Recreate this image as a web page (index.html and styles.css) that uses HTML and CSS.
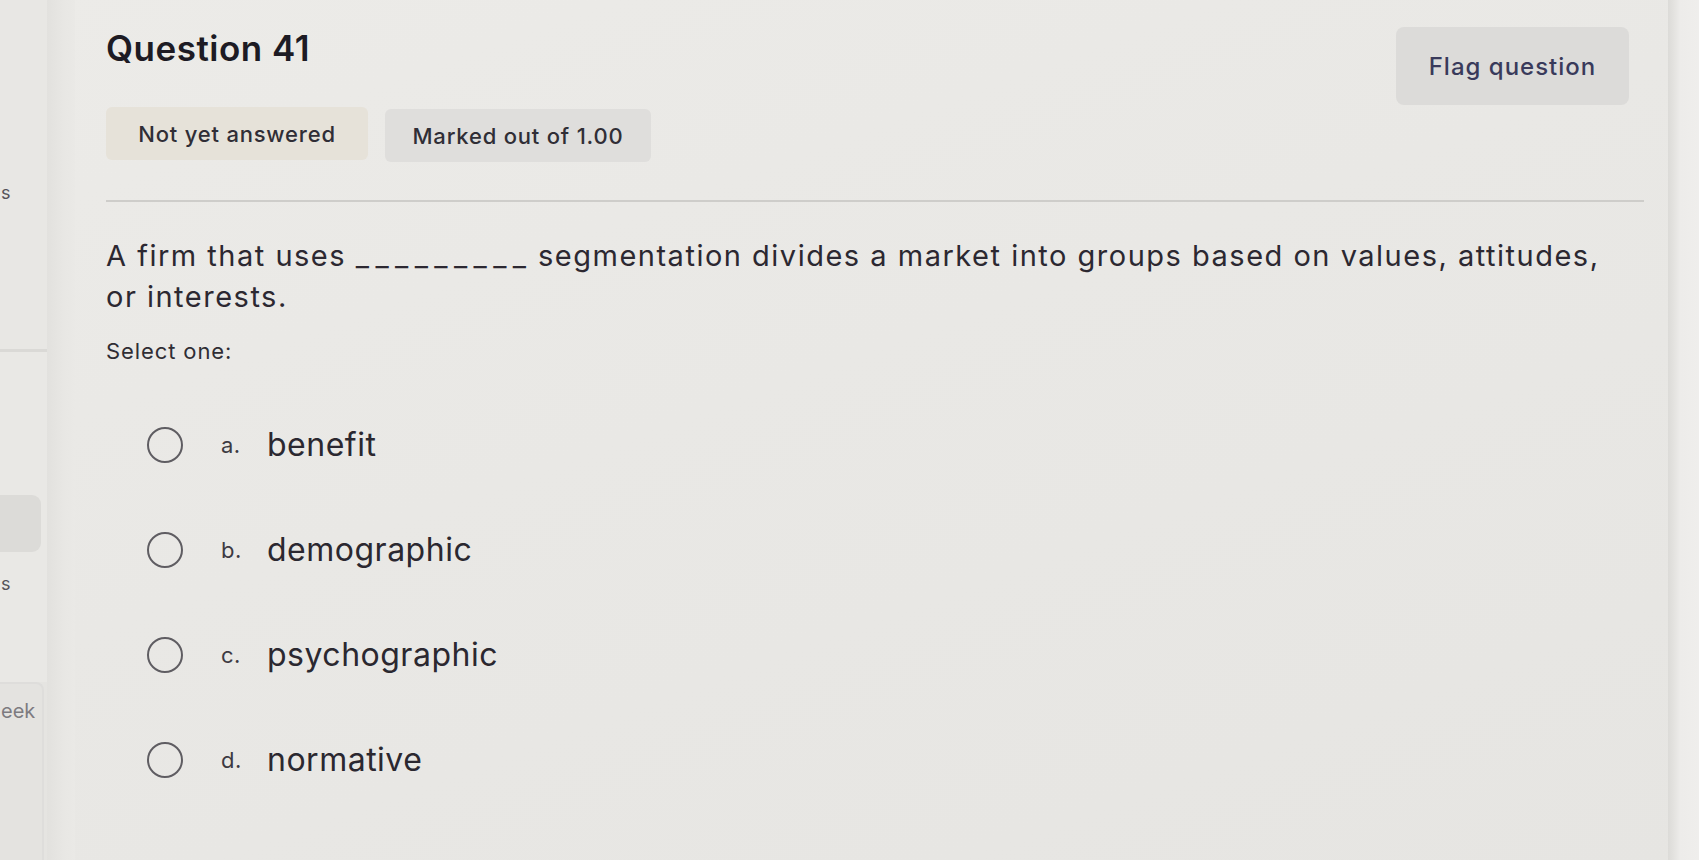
FILE: index.html
```html
<!DOCTYPE html>
<html lang="en">
<head>
<meta charset="utf-8">
<title>Question 41</title>
<link rel="stylesheet" href="styles.css">
</head>
<body>
<div class="page">
  <aside class="sidebar">
    <div class="side-panel side-top"><span class="side-cut cut1">s</span></div>
    <div class="side-panel side-mid">
      <div class="side-box"></div>
      <span class="side-cut cut2">s</span>
    </div>
    <div class="side-panel side-bottom"><span class="side-week">eek</span></div>
  </aside>
  <div class="gutter"></div>
  <main class="main">
    <div class="head">
      <div class="head-left">
        <h1 class="title">Question 41</h1>
        <div class="badges">
          <div class="badge badge-state">Not yet answered</div>
          <div class="badge badge-grade">Marked out of 1.00</div>
        </div>
      </div>
      <button class="flag">Flag question</button>
    </div>
    <div class="rule"></div>
    <p class="qtext">A firm that uses <span class="blank">_________</span> segmentation divides a market into groups based on values, attitudes,<br>or interests.</p>
    <p class="prompt">Select one:</p>
    <div class="answers">
      <label class="opt"><span class="radio"></span><span class="letter">a.</span><span class="otext">benefit</span></label>
      <label class="opt"><span class="radio"></span><span class="letter">b.</span><span class="otext">demographic</span></label>
      <label class="opt"><span class="radio"></span><span class="letter">c.</span><span class="otext">psychographic</span></label>
      <label class="opt"><span class="radio"></span><span class="letter">d.</span><span class="otext">normative</span></label>
    </div>
  </main>
  <div class="right-strip"></div>
</div>
</body>
</html>
```

FILE: styles.css
```css
* { box-sizing: border-box; }
html, body {
  margin: 0;
  padding: 0;
  width: 1699px;
  height: 860px;
  overflow: hidden;
}
body {
  font-family: Inter, "DejaVu Sans", "Liberation Sans", sans-serif;
  background: #e9e8e5;
  color: #2d2a32;
}
.page {
  display: flex;
  height: 860px;
  background: linear-gradient(160deg, #ecebe8 0%, #e9e8e5 45%, #e6e5e2 100%);
}

/* left sidebar (cut off by the screen edge) */
.sidebar {
  width: 47px;
  flex: none;
  display: flex;
  flex-direction: column;
  overflow: hidden;
  background: #e5e4e1;
}
.side-panel {
  overflow: hidden;
}
.side-top {
  height: 352px;
  background: #e8e7e4;
  border-bottom: 3px solid #dad9d6;
}
.side-mid {
  height: 330px;
  background: #e9e8e5;
  padding-top: 143px;
}
.side-box {
  width: 41px;
  height: 57px;
  background: #dcdbd8;
  border-radius: 0 9px 9px 0;
}
.side-bottom {
  flex: 1;
  width: 44px;
  background: #e4e3e0;
  border-top: 2px solid #dedddb;
  border-right: 2px solid #dedddb;
  border-radius: 0 8px 0 0;
  padding-top: 15px;
}
.side-cut {
  display: block;
  font-size: 18px;
  line-height: 20px;
  color: #55535a;
  padding-left: 1px;
}
.cut1 { margin-top: 183px; }
.cut2 { margin-top: 22px; }
.side-week {
  display: block;
  font-size: 20px;
  line-height: 24px;
  color: #7d7b80;
  padding-left: 1px;
}
.gutter {
  width: 28px;
  flex: none;
  background: linear-gradient(90deg, #e2e1de 0%, #e8e7e4 60%, #eae9e6 100%);
}

/* main column */
.main {
  width: 1593px;
  flex: none;
  padding: 27px 24px 0 31px;
}
.head {
  display: flex;
  justify-content: space-between;
  align-items: flex-start;
}
.title {
  margin: 1px 0 0 0;
  font-size: 35px;
  line-height: 40px;
  font-weight: 600;
  color: #1d1b24;
  letter-spacing: 0.5px;
}
.badges {
  display: flex;
  gap: 17px;
  margin-top: 39px;
}
.badge {
  height: 53px;
  display: flex;
  align-items: center;
  justify-content: center;
  font-size: 22px;
  font-weight: 500;
  color: #302e36;
  letter-spacing: 0.8px;
  border-radius: 6px;
}
.badge-state {
  width: 262px;
  background: #e6e2d9;
}
.badge-grade {
  width: 266px;
  background: #dfdedc;
  margin-top: 2px;
}
.flag {
  width: 233px;
  height: 78px;
  margin-right: 15px;
  border: none;
  border-radius: 8px;
  background: #dcdbd9;
  font-family: inherit;
  font-size: 24px;
  font-weight: 500;
  letter-spacing: 1px;
  color: #393a5b;
  padding: 0;
}
.rule {
  height: 2px;
  margin-top: 38px;
  background: #cecdca;
}
.qtext {
  margin: 33px 0 0 0;
  font-size: 29px;
  line-height: 41px;
  letter-spacing: 1.5px;
  color: #2c2831;
}
.blank {
  letter-spacing: 6.4px;
  margin-right: -4px;
}
.prompt {
  margin: 20px 0 0 0;
  font-size: 22px;
  line-height: 28px;
  letter-spacing: 0.9px;
  color: #2f2d34;
}
.answers {
  margin-top: 27px;
  display: flex;
  flex-direction: column;
}
.opt {
  height: 105px;
  display: flex;
  align-items: center;
  padding-left: 41px;
}
.radio {
  width: 36px;
  height: 36px;
  border: 2px solid #5f5d62;
  border-radius: 50%;
  flex: none;
  margin-right: 38px;
}
.letter {
  width: 46px;
  flex: none;
  font-size: 22px;
  letter-spacing: 0.5px;
  color: #3d3a42;
}
.otext {
  font-size: 32px;
  letter-spacing: 0.5px;
  color: #2b2830;
}

/* right edge */
.right-strip {
  flex: 1;
  background: linear-gradient(90deg, #dcdbd8 0%, #e4e3e0 20%, #edecea 40%, #efeeec 100%);
}
```
